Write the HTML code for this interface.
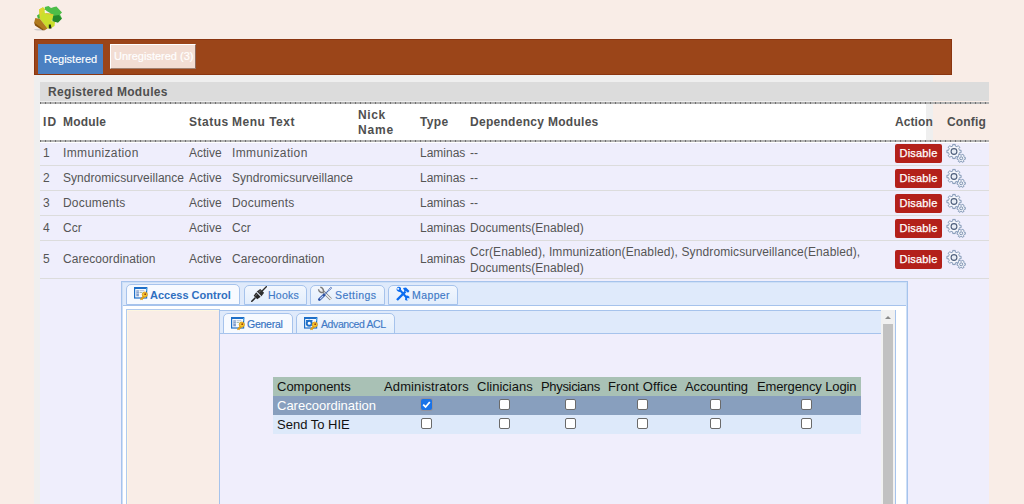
<!DOCTYPE html>
<html><head><meta charset="utf-8">
<style>
*{margin:0;padding:0;box-sizing:border-box}
html,body{width:1024px;height:504px;overflow:hidden;background:#f9ede7;font-family:"Liberation Sans",sans-serif;position:relative}
.a{position:absolute}
.t{position:absolute;white-space:nowrap;font-size:12px;color:#555;line-height:14px;letter-spacing:0}
.b{font-weight:bold;color:#4f4f4f}
.dot{position:absolute;height:2px;background:repeating-linear-gradient(90deg,#727272 0,#727272 1px,#b2b2b2 1px,#b2b2b2 5px)}
.sep{position:absolute;left:40px;width:949px;height:1px;background:#dcdcdc}
.btn{position:absolute;left:895px;width:47px;height:19px;background:#b3201a;border-radius:2px;color:#fff;font-size:11px;line-height:19px;text-align:center;letter-spacing:.17px;-webkit-text-stroke:.25px #fff}
.gear{position:absolute;left:946px;width:20px;height:20px}
.tab{position:absolute;border:1px solid #a6c3ec;border-radius:5px 5px 0 0;background:linear-gradient(#f2f7fe,#e3eefc)}
.tt{position:absolute;white-space:nowrap;font-size:10.5px;line-height:12px;color:#4079c6;-webkit-text-stroke:.15px #4079c6}
.cb{position:absolute;width:11px;height:11px;border:1px solid #6a6a6a;border-radius:2px;background:#fff}
.ac{position:absolute;white-space:nowrap;font-size:13px;line-height:15px;color:#111}
</style></head><body>
<svg class="a" style="left:32px;top:4px" width="32" height="28" viewBox="0 0 32 28">
  <ellipse cx="8" cy="25.6" rx="6" ry="0.9" fill="#b8b8bc" opacity=".7"/>
  <path d="M12.8 3 L16.5 2 L19 4 L22 3 L24.5 2.5 L30 8.5 L28 10.5 L30 14.5 L26 18.5 L21 17 L18 9 L13 6 Z" fill="#4dbd48"/>
  <path d="M20.5 12 L27 11 L29.7 14.8 L26 18.5 L20.5 17.5 Z" fill="#24882c"/>
  <path d="M5 11.5 L8 9.5 L8.8 14.5 L6 14.8 Z" fill="#44b440"/>
  <path d="M7 5.5 L11 3.3 L13 5 L13.5 9 L18 9.5 L21.5 10.5 L20.8 14 L19.5 17 L23 18 L22.5 22 L18.5 24.5 L15.5 24.5 L8 15 L7.5 10 Z" fill="#cadf2c"/>
  <path d="M7 5.5 L11 3.3 L12.5 5.5 L10 9 L8 15 L7.5 10 Z" fill="#dcd630"/>
  <path d="M13.5 9 L18 9.5 L21.5 10.5 L21 11.2 L17.5 10.5 L13.8 10 Z" fill="#e6b040" opacity=".8"/>
  <path d="M2.2 18.5 L3.3 14 L8 15 L15.5 24.5 L12.5 26.3 L5 22.5 Z" fill="#b07a1e"/>
  <path d="M2.2 18.5 L12.5 26.3 L10.5 26.3 L3 21.5 Z" fill="#85520e"/>
  <path d="M16.8 20.5 L18.8 20.5 L19.5 24.5 L16.8 24.5 Z" fill="#1e2e1a"/>
  <path d="M12.6 6 L14.2 6.5 L14 9.2 L12.8 9 Z" fill="#f8f4ec"/>
</svg>
<div class="a" style="left:34px;top:39px;width:918px;height:36px;background:#9b4519;border:1px solid #8a3510"></div>
<div class="a" style="left:38px;top:44px;width:65px;height:30px;background:#4a80c2"></div>
<div class="t" style="left:44px;top:52px;font-size:11px;color:#fff;letter-spacing:0;-webkit-text-stroke:.15px #fff">Registered</div>
<div class="a" style="left:110px;top:44px;width:86px;height:25px;background:#f2ddd3;border:1px solid #fff;border-right-color:#8c6a5c;border-bottom-color:#a08070"></div>
<div class="t" style="left:114px;top:49px;font-size:11px;color:#fff;letter-spacing:0;-webkit-text-stroke:.2px #fff">Unregistered (3)</div>
<div class="a" style="left:34px;top:75px;width:899px;height:429px;background:#efefef"></div>
<div class="a" style="left:40px;top:82px;width:949px;height:19px;background:#dcdcdc"></div>
<div class="t b" style="left:48px;top:85px;letter-spacing:.32px">Registered Modules</div>
<div class="a" style="left:40px;top:103px;width:886px;height:38px;background:#fff"></div>
<div class="dot" style="left:40px;top:102px;width:949px"></div>
<div class="dot" style="left:40px;top:140px;width:949px"></div>
<div class="t b" style="left:43px;top:115px;letter-spacing:1.2px">ID</div>
<div class="t b" style="left:63px;top:115px;letter-spacing:0.2px">Module</div>
<div class="t b" style="left:189px;top:115px;letter-spacing:0.5px">Status</div>
<div class="t b" style="left:232px;top:115px;letter-spacing:0.5px">Menu Text</div>
<div class="t b" style="left:420px;top:115px;letter-spacing:0.33px">Type</div>
<div class="t b" style="left:470px;top:115px;letter-spacing:0.29px">Dependency Modules</div>
<div class="t b" style="left:895px;top:115px;letter-spacing:0.08px">Action</div>
<div class="t b" style="left:947px;top:115px;letter-spacing:0.16px">Config</div>
<div class="t b" style="left:358px;top:107px;line-height:16px;letter-spacing:.57px">Nick</div>
<div class="t b" style="left:358px;top:122px;line-height:16px;letter-spacing:.8px">Name</div>
<div class="a" style="left:40px;top:142px;width:949px;height:362px;background:#efeefc;border-top:1px solid #fff"></div>
<div class="sep" style="top:165px"></div>
<div class="sep" style="top:190px"></div>
<div class="sep" style="top:215px"></div>
<div class="sep" style="top:240px"></div>
<div class="sep" style="top:278px"></div>
<div class="t" style="left:43px;top:146px">1</div>
<div class="t" style="left:63px;top:146px;letter-spacing:0.36px">Immunization</div>
<div class="t" style="left:189px;top:146px">Active</div>
<div class="t" style="left:232px;top:146px;letter-spacing:0.36px">Immunization</div>
<div class="t" style="left:420px;top:146px">Laminas</div>
<div class="t" style="left:470px;top:146px;letter-spacing:0px">--</div>
<div class="btn" style="top:144px">Disable</div>
<svg class="gear" style="top:143px" viewBox="0 0 20 20" width="20" height="20">
<g stroke="#7890b0" stroke-width="0.9" stroke-linejoin="round">
<path d="M13.17 6.36 L13.47 7.32 L15.09 7.23 L15.09 9.77 L13.47 9.68 L13.17 10.64 L12.70 11.54 L13.91 12.62 L12.12 14.41 L11.04 13.20 L10.14 13.67 L9.18 13.97 L9.27 15.59 L6.73 15.59 L6.82 13.97 L5.86 13.67 L4.96 13.20 L3.88 14.41 L2.09 12.62 L3.30 11.54 L2.83 10.64 L2.53 9.68 L0.91 9.77 L0.91 7.23 L2.53 7.32 L2.83 6.36 L3.30 5.46 L2.09 4.38 L3.88 2.59 L4.96 3.80 L5.86 3.33 L6.82 3.03 L6.73 1.41 L9.27 1.41 L9.18 3.03 L10.14 3.33 L11.04 3.80 L12.12 2.59 L13.91 4.38 L12.70 5.46 Z" fill="#f3f5fa"/>
<circle cx="8" cy="8.5" r="2.9" fill="#e8edf5" stroke="#4e5f7c" stroke-width="1.1"/>
<path d="M18.06 13.65 L18.37 14.38 L19.28 14.32 L19.28 16.28 L18.37 16.22 L18.06 16.95 L17.58 17.58 L18.09 18.35 L16.39 19.33 L15.99 18.50 L15.20 18.60 L14.41 18.50 L14.01 19.33 L12.31 18.35 L12.82 17.58 L12.34 16.95 L12.03 16.22 L11.12 16.28 L11.12 14.32 L12.03 14.38 L12.34 13.65 L12.82 13.02 L12.31 12.25 L14.01 11.27 L14.41 12.10 L15.20 12.00 L15.99 12.10 L16.39 11.27 L18.09 12.25 L17.58 13.02 Z" fill="#f3f5fa"/>
<circle cx="15.2" cy="15.3" r="1.5" fill="#eef2f8" stroke="#6f86a8"/>
</g></svg>
<div class="t" style="left:43px;top:171px">2</div>
<div class="t" style="left:63px;top:171px;letter-spacing:0.05px">Syndromicsurveillance</div>
<div class="t" style="left:189px;top:171px">Active</div>
<div class="t" style="left:232px;top:171px;letter-spacing:0.05px">Syndromicsurveillance</div>
<div class="t" style="left:420px;top:171px">Laminas</div>
<div class="t" style="left:470px;top:171px;letter-spacing:0px">--</div>
<div class="btn" style="top:169px">Disable</div>
<svg class="gear" style="top:168px" viewBox="0 0 20 20" width="20" height="20">
<g stroke="#7890b0" stroke-width="0.9" stroke-linejoin="round">
<path d="M13.17 6.36 L13.47 7.32 L15.09 7.23 L15.09 9.77 L13.47 9.68 L13.17 10.64 L12.70 11.54 L13.91 12.62 L12.12 14.41 L11.04 13.20 L10.14 13.67 L9.18 13.97 L9.27 15.59 L6.73 15.59 L6.82 13.97 L5.86 13.67 L4.96 13.20 L3.88 14.41 L2.09 12.62 L3.30 11.54 L2.83 10.64 L2.53 9.68 L0.91 9.77 L0.91 7.23 L2.53 7.32 L2.83 6.36 L3.30 5.46 L2.09 4.38 L3.88 2.59 L4.96 3.80 L5.86 3.33 L6.82 3.03 L6.73 1.41 L9.27 1.41 L9.18 3.03 L10.14 3.33 L11.04 3.80 L12.12 2.59 L13.91 4.38 L12.70 5.46 Z" fill="#f3f5fa"/>
<circle cx="8" cy="8.5" r="2.9" fill="#e8edf5" stroke="#4e5f7c" stroke-width="1.1"/>
<path d="M18.06 13.65 L18.37 14.38 L19.28 14.32 L19.28 16.28 L18.37 16.22 L18.06 16.95 L17.58 17.58 L18.09 18.35 L16.39 19.33 L15.99 18.50 L15.20 18.60 L14.41 18.50 L14.01 19.33 L12.31 18.35 L12.82 17.58 L12.34 16.95 L12.03 16.22 L11.12 16.28 L11.12 14.32 L12.03 14.38 L12.34 13.65 L12.82 13.02 L12.31 12.25 L14.01 11.27 L14.41 12.10 L15.20 12.00 L15.99 12.10 L16.39 11.27 L18.09 12.25 L17.58 13.02 Z" fill="#f3f5fa"/>
<circle cx="15.2" cy="15.3" r="1.5" fill="#eef2f8" stroke="#6f86a8"/>
</g></svg>
<div class="t" style="left:43px;top:196px">3</div>
<div class="t" style="left:63px;top:196px;letter-spacing:0.19px">Documents</div>
<div class="t" style="left:189px;top:196px">Active</div>
<div class="t" style="left:232px;top:196px;letter-spacing:0.19px">Documents</div>
<div class="t" style="left:420px;top:196px">Laminas</div>
<div class="t" style="left:470px;top:196px;letter-spacing:0px">--</div>
<div class="btn" style="top:194px">Disable</div>
<svg class="gear" style="top:193px" viewBox="0 0 20 20" width="20" height="20">
<g stroke="#7890b0" stroke-width="0.9" stroke-linejoin="round">
<path d="M13.17 6.36 L13.47 7.32 L15.09 7.23 L15.09 9.77 L13.47 9.68 L13.17 10.64 L12.70 11.54 L13.91 12.62 L12.12 14.41 L11.04 13.20 L10.14 13.67 L9.18 13.97 L9.27 15.59 L6.73 15.59 L6.82 13.97 L5.86 13.67 L4.96 13.20 L3.88 14.41 L2.09 12.62 L3.30 11.54 L2.83 10.64 L2.53 9.68 L0.91 9.77 L0.91 7.23 L2.53 7.32 L2.83 6.36 L3.30 5.46 L2.09 4.38 L3.88 2.59 L4.96 3.80 L5.86 3.33 L6.82 3.03 L6.73 1.41 L9.27 1.41 L9.18 3.03 L10.14 3.33 L11.04 3.80 L12.12 2.59 L13.91 4.38 L12.70 5.46 Z" fill="#f3f5fa"/>
<circle cx="8" cy="8.5" r="2.9" fill="#e8edf5" stroke="#4e5f7c" stroke-width="1.1"/>
<path d="M18.06 13.65 L18.37 14.38 L19.28 14.32 L19.28 16.28 L18.37 16.22 L18.06 16.95 L17.58 17.58 L18.09 18.35 L16.39 19.33 L15.99 18.50 L15.20 18.60 L14.41 18.50 L14.01 19.33 L12.31 18.35 L12.82 17.58 L12.34 16.95 L12.03 16.22 L11.12 16.28 L11.12 14.32 L12.03 14.38 L12.34 13.65 L12.82 13.02 L12.31 12.25 L14.01 11.27 L14.41 12.10 L15.20 12.00 L15.99 12.10 L16.39 11.27 L18.09 12.25 L17.58 13.02 Z" fill="#f3f5fa"/>
<circle cx="15.2" cy="15.3" r="1.5" fill="#eef2f8" stroke="#6f86a8"/>
</g></svg>
<div class="t" style="left:43px;top:221px">4</div>
<div class="t" style="left:63px;top:221px;letter-spacing:0px">Ccr</div>
<div class="t" style="left:189px;top:221px">Active</div>
<div class="t" style="left:232px;top:221px;letter-spacing:0px">Ccr</div>
<div class="t" style="left:420px;top:221px">Laminas</div>
<div class="t" style="left:470px;top:221px;letter-spacing:0.06px">Documents(Enabled)</div>
<div class="btn" style="top:219px">Disable</div>
<svg class="gear" style="top:218px" viewBox="0 0 20 20" width="20" height="20">
<g stroke="#7890b0" stroke-width="0.9" stroke-linejoin="round">
<path d="M13.17 6.36 L13.47 7.32 L15.09 7.23 L15.09 9.77 L13.47 9.68 L13.17 10.64 L12.70 11.54 L13.91 12.62 L12.12 14.41 L11.04 13.20 L10.14 13.67 L9.18 13.97 L9.27 15.59 L6.73 15.59 L6.82 13.97 L5.86 13.67 L4.96 13.20 L3.88 14.41 L2.09 12.62 L3.30 11.54 L2.83 10.64 L2.53 9.68 L0.91 9.77 L0.91 7.23 L2.53 7.32 L2.83 6.36 L3.30 5.46 L2.09 4.38 L3.88 2.59 L4.96 3.80 L5.86 3.33 L6.82 3.03 L6.73 1.41 L9.27 1.41 L9.18 3.03 L10.14 3.33 L11.04 3.80 L12.12 2.59 L13.91 4.38 L12.70 5.46 Z" fill="#f3f5fa"/>
<circle cx="8" cy="8.5" r="2.9" fill="#e8edf5" stroke="#4e5f7c" stroke-width="1.1"/>
<path d="M18.06 13.65 L18.37 14.38 L19.28 14.32 L19.28 16.28 L18.37 16.22 L18.06 16.95 L17.58 17.58 L18.09 18.35 L16.39 19.33 L15.99 18.50 L15.20 18.60 L14.41 18.50 L14.01 19.33 L12.31 18.35 L12.82 17.58 L12.34 16.95 L12.03 16.22 L11.12 16.28 L11.12 14.32 L12.03 14.38 L12.34 13.65 L12.82 13.02 L12.31 12.25 L14.01 11.27 L14.41 12.10 L15.20 12.00 L15.99 12.10 L16.39 11.27 L18.09 12.25 L17.58 13.02 Z" fill="#f3f5fa"/>
<circle cx="15.2" cy="15.3" r="1.5" fill="#eef2f8" stroke="#6f86a8"/>
</g></svg>
<div class="t" style="left:43px;top:252px">5</div>
<div class="t" style="left:63px;top:252px;letter-spacing:0.07px">Carecoordination</div>
<div class="t" style="left:189px;top:252px">Active</div>
<div class="t" style="left:232px;top:252px;letter-spacing:0.07px">Carecoordination</div>
<div class="t" style="left:420px;top:252px">Laminas</div>
<div class="t" style="left:470px;top:244px;line-height:16px;letter-spacing:.11px">Ccr(Enabled), Immunization(Enabled), Syndromicsurveillance(Enabled),</div>
<div class="t" style="left:470px;top:260px;line-height:16px;letter-spacing:.06px">Documents(Enabled)</div>
<div class="btn" style="top:250px">Disable</div>
<svg class="gear" style="top:249px" viewBox="0 0 20 20" width="20" height="20">
<g stroke="#7890b0" stroke-width="0.9" stroke-linejoin="round">
<path d="M13.17 6.36 L13.47 7.32 L15.09 7.23 L15.09 9.77 L13.47 9.68 L13.17 10.64 L12.70 11.54 L13.91 12.62 L12.12 14.41 L11.04 13.20 L10.14 13.67 L9.18 13.97 L9.27 15.59 L6.73 15.59 L6.82 13.97 L5.86 13.67 L4.96 13.20 L3.88 14.41 L2.09 12.62 L3.30 11.54 L2.83 10.64 L2.53 9.68 L0.91 9.77 L0.91 7.23 L2.53 7.32 L2.83 6.36 L3.30 5.46 L2.09 4.38 L3.88 2.59 L4.96 3.80 L5.86 3.33 L6.82 3.03 L6.73 1.41 L9.27 1.41 L9.18 3.03 L10.14 3.33 L11.04 3.80 L12.12 2.59 L13.91 4.38 L12.70 5.46 Z" fill="#f3f5fa"/>
<circle cx="8" cy="8.5" r="2.9" fill="#e8edf5" stroke="#4e5f7c" stroke-width="1.1"/>
<path d="M18.06 13.65 L18.37 14.38 L19.28 14.32 L19.28 16.28 L18.37 16.22 L18.06 16.95 L17.58 17.58 L18.09 18.35 L16.39 19.33 L15.99 18.50 L15.20 18.60 L14.41 18.50 L14.01 19.33 L12.31 18.35 L12.82 17.58 L12.34 16.95 L12.03 16.22 L11.12 16.28 L11.12 14.32 L12.03 14.38 L12.34 13.65 L12.82 13.02 L12.31 12.25 L14.01 11.27 L14.41 12.10 L15.20 12.00 L15.99 12.10 L16.39 11.27 L18.09 12.25 L17.58 13.02 Z" fill="#f3f5fa"/>
<circle cx="15.2" cy="15.3" r="1.5" fill="#eef2f8" stroke="#6f86a8"/>
</g></svg>
<div class="a" style="left:121px;top:281px;width:787px;height:230px;background:#fff;border:1px solid #a6c3ec;box-shadow:inset 0 0 0 1px #cddff6"></div>
<div class="a" style="left:123px;top:283px;width:783px;height:23px;background:#dfeafb;border-bottom:1px solid #a6c3ec"></div>
<div class="tab" style="left:126px;top:284px;width:114px;height:21px;background:#f7faff"></div>
<svg class="a" style="left:134px;top:287px" width="15" height="14" viewBox="0 0 15 14">
<rect x="0.6" y="0.6" width="12" height="10.4" fill="#f6f9fd" stroke="#1e6fc8" stroke-width="1.2"/>
<rect x="0" y="0" width="13.2" height="2" fill="#1e6fc8"/>
<rect x="12" y="1" width="1.2" height="3" fill="#4aa0e0"/>
<rect x="2.3" y="3.3" width="2.6" height="6" fill="#7f9ccc"/><rect x="2.3" y="4.6" width="2.6" height=".5" fill="#dde6f4"/><rect x="2.3" y="6.2" width="2.6" height=".5" fill="#dde6f4"/><rect x="5.6" y="3.3" width="4.6" height=".9" fill="#aab8cc"/><rect x="5.6" y="5" width="2.6" height=".9" fill="#9fb8a8"/>
<path d="M9.6 8.6 L6.2 12 L6.8 12.9 L7.6 12.4 L8.2 12.9 L8.8 12.2 L10.8 9.8 Z" fill="#e3a21a" stroke="#c88a10" stroke-width=".4"/>
<circle cx="10.8" cy="7.6" r="2.6" fill="#f5c62e" stroke="#d09010" stroke-width=".7"/>
<circle cx="11.2" cy="7.2" r=".9" fill="#9a3a10"/>
</svg>
<div class="t" style="left:150px;top:288px;font-size:11px;font-weight:bold;color:#2f6fc0;letter-spacing:0">Access Control</div>
<div class="tab" style="left:244px;top:285px;width:63px;height:20px"></div>
<svg class="a" style="left:251px;top:286px" width="16" height="16" viewBox="0 0 16 16">
<g transform="rotate(-45 8 8)">
<rect x="-3" y="7.3" width="6" height="1.5" fill="#2a2a2a"/>
<rect x="12" y="7.4" width="7" height="1.3" fill="#2a2a2a"/>
<path d="M3 5.5 L7.3 4.8 L7.3 11.2 L3 10.5 Z" fill="#262626"/>
<path d="M8.2 4.6 L12.5 5.3 L12.5 10.7 L8.2 11.4 Z" fill="#303030"/>
<rect x="7.3" y="4.6" width="0.9" height="6.8" fill="#c8d0dc"/>
<rect x="4" y="6.3" width="2.5" height="1" fill="#666"/>
<rect x="9" y="6.3" width="2.5" height="1" fill="#666"/>
</g>
</svg>
<div class="tt" style="left:268px;top:289px;letter-spacing:.25px">Hooks</div>
<div class="tab" style="left:310px;top:285px;width:75px;height:20px"></div>
<svg class="a" style="left:317px;top:286px" width="16" height="16" viewBox="0 0 16 16">
<path d="M5 4.5 L13.8 13.3" stroke="#808080" stroke-width="2.8"/>
<path d="M5 4.5 L13.8 13.3" stroke="#f4f4f4" stroke-width="1.4"/>
<path d="M1.5 3.2 A3.6 3.6 0 0 0 6.6 6.2 L6.6 4.8 M3.3 1.3 A3.6 3.6 0 0 1 6.4 5.5" stroke="#7a7a7a" stroke-width="1.4" fill="#eee"/>
<path d="M14.5 1.5 L6 10" stroke="#3d63b0" stroke-width="1.8" stroke-dasharray="1 .7"/>
<path d="M6.8 9.2 L2.4 13.6" stroke="#2c52a6" stroke-width="2.8" stroke-linecap="round"/>
<path d="M6.2 9.8 L3 13" stroke="#c4d4f0" stroke-width="1.1"/>
</svg>
<div class="tt" style="left:335px;top:289px;letter-spacing:.43px">Settings</div>
<div class="tab" style="left:388px;top:285px;width:70px;height:20px"></div>
<svg class="a" style="left:395px;top:286px" width="16" height="16" viewBox="0 0 16 16">
<path d="M2 14 L10.5 5.5" stroke="#0b6cf0" stroke-width="2.4"/>
<path d="M8 2 L11 1.5 L14.5 5 L13 6.8 L11.5 5.5 L9.5 5 Z" fill="#0b6cf0"/>
<path d="M4 3 L12 12" stroke="#0b6cf0" stroke-width="2"/>
<path d="M1.5 3 A3 3 0 0 0 6 5.5 L6 2 A3 3 0 0 0 2.5 1 Z" fill="#0b6cf0"/>
<path d="M14.5 12 A3 3 0 0 1 10 14 L10.5 10 A3 3 0 0 1 14 10.5 Z" fill="#0b6cf0"/>
<circle cx="3.2" cy="2.8" r="1.1" fill="#e8f0fb"/>
<circle cx="13" cy="13" r="1.1" fill="#e8f0fb"/>
</svg>
<div class="tt" style="left:412px;top:289px;letter-spacing:.4px">Mapper</div>
<div class="a" style="left:126px;top:309px;width:94px;height:200px;background:#f9ede7;border:1px solid #b0cbef;border-right:none;box-shadow:inset 1px 1px 0 0 #fdf6e0"></div>
<div class="a" style="left:219px;top:310px;width:677px;height:200px;background:#f0eefc;border:1px solid #a6c3ec"></div>
<div class="a" style="left:220px;top:311px;width:661px;height:23px;background:#dfeafb;border-bottom:1px solid #a6c3ec"></div>
<div class="tab" style="left:223px;top:313px;width:70px;height:21px;background:#f7faff"></div>
<svg class="a" style="left:231px;top:317px" width="15" height="14" viewBox="0 0 15 14">
<rect x="0.6" y="0.6" width="12" height="10.4" fill="#f6f9fd" stroke="#1e6fc8" stroke-width="1.2"/>
<rect x="0" y="0" width="13.2" height="2" fill="#1e6fc8"/>
<rect x="12" y="1" width="1.2" height="3" fill="#4aa0e0"/>
<rect x="2.3" y="3.3" width="2.6" height="6" fill="#7f9ccc"/><rect x="2.3" y="4.6" width="2.6" height=".5" fill="#dde6f4"/><rect x="2.3" y="6.2" width="2.6" height=".5" fill="#dde6f4"/><rect x="5.6" y="3.3" width="4.6" height=".9" fill="#aab8cc"/><rect x="5.6" y="5" width="2.6" height=".9" fill="#9fb8a8"/>
<path d="M9.6 8.6 L6.2 12 L6.8 12.9 L7.6 12.4 L8.2 12.9 L8.8 12.2 L10.8 9.8 Z" fill="#e3a21a" stroke="#c88a10" stroke-width=".4"/>
<circle cx="10.8" cy="7.6" r="2.6" fill="#f5c62e" stroke="#d09010" stroke-width=".7"/>
<circle cx="11.2" cy="7.2" r=".9" fill="#9a3a10"/>
</svg>
<div class="tt" style="left:247px;top:318px;color:#2f6fc0;letter-spacing:-.25px">General</div>
<div class="tab" style="left:296px;top:313px;width:99px;height:21px"></div>
<svg class="a" style="left:304px;top:317px" width="15" height="14" viewBox="0 0 15 14">
<rect x="0.6" y="0.6" width="12" height="10.4" fill="#f6f9fd" stroke="#1e6fc8" stroke-width="1.2"/>
<rect x="0" y="0" width="13.2" height="2" fill="#1e6fc8"/>
<rect x="12" y="1" width="1.2" height="3" fill="#4aa0e0"/>
<circle cx="5.2" cy="6.2" r="2.5" fill="#fff" stroke="#1e6fc8" stroke-width="1.9"/><rect x="2" y="3" width="6.5" height="1" fill="#1e6fc8"/>
<path d="M9.6 8.6 L6.2 12 L6.8 12.9 L7.6 12.4 L8.2 12.9 L8.8 12.2 L10.8 9.8 Z" fill="#e3a21a" stroke="#c88a10" stroke-width=".4"/>
<circle cx="10.8" cy="7.6" r="2.6" fill="#f5c62e" stroke="#d09010" stroke-width=".7"/>
<circle cx="11.2" cy="7.2" r=".9" fill="#9a3a10"/>
</svg>
<div class="tt" style="left:321px;top:318px;letter-spacing:-.4px">Advanced ACL</div>
<div class="a" style="left:881px;top:310px;width:14px;height:200px;background:#f1f1f1"></div>
<div class="a" style="left:883px;top:324px;width:10px;height:200px;background:#c1c1c1"></div>
<svg class="a" style="left:881px;top:312px" width="14" height="10"><path d="M4 7 L7 4 L10 7 Z" fill="#8a8a8a"/></svg>
<div class="a" style="left:273px;top:377px;width:588px;height:19px;background:#a9c1b5"></div>
<div class="a" style="left:273px;top:396px;width:588px;height:19px;background:#889fbe"></div>
<div class="a" style="left:273px;top:415px;width:588px;height:19px;background:#dde9fa"></div>
<div class="ac" style="left:277px;top:379px;letter-spacing:0px">Components</div>
<div class="ac" style="left:384px;top:379px;letter-spacing:0.12px">Administrators</div>
<div class="ac" style="left:477px;top:379px;letter-spacing:0px">Clinicians</div>
<div class="ac" style="left:541px;top:379px;letter-spacing:-0.33px">Physicians</div>
<div class="ac" style="left:608px;top:379px;letter-spacing:0.14px">Front Office</div>
<div class="ac" style="left:685px;top:379px;letter-spacing:-0.14px">Accounting</div>
<div class="ac" style="left:757px;top:379px;letter-spacing:-0.12px">Emergency Login</div>
<div class="ac" style="left:277px;top:398px;color:#fff">Carecoordination</div>
<div class="ac" style="left:277px;top:417px">Send To HIE</div>
<div class="a" style="left:421px;top:399px;width:11px;height:11px;background:#1a73e8;border-radius:2px;box-shadow:0 0 0 1px rgba(160,130,120,.45)"></div>
<svg class="a" style="left:421px;top:399px" width="11" height="11"><path d="M2.2 5.6 L4.6 8 L8.8 3" fill="none" stroke="#fff" stroke-width="1.8"/></svg>
<div class="cb" style="left:421px;top:418px"></div>
<div class="cb" style="left:499px;top:399px"></div>
<div class="cb" style="left:499px;top:418px"></div>
<div class="cb" style="left:565px;top:399px"></div>
<div class="cb" style="left:565px;top:418px"></div>
<div class="cb" style="left:637px;top:399px"></div>
<div class="cb" style="left:637px;top:418px"></div>
<div class="cb" style="left:710px;top:399px"></div>
<div class="cb" style="left:710px;top:418px"></div>
<div class="cb" style="left:801px;top:399px"></div>
<div class="cb" style="left:801px;top:418px"></div>
</body></html>
